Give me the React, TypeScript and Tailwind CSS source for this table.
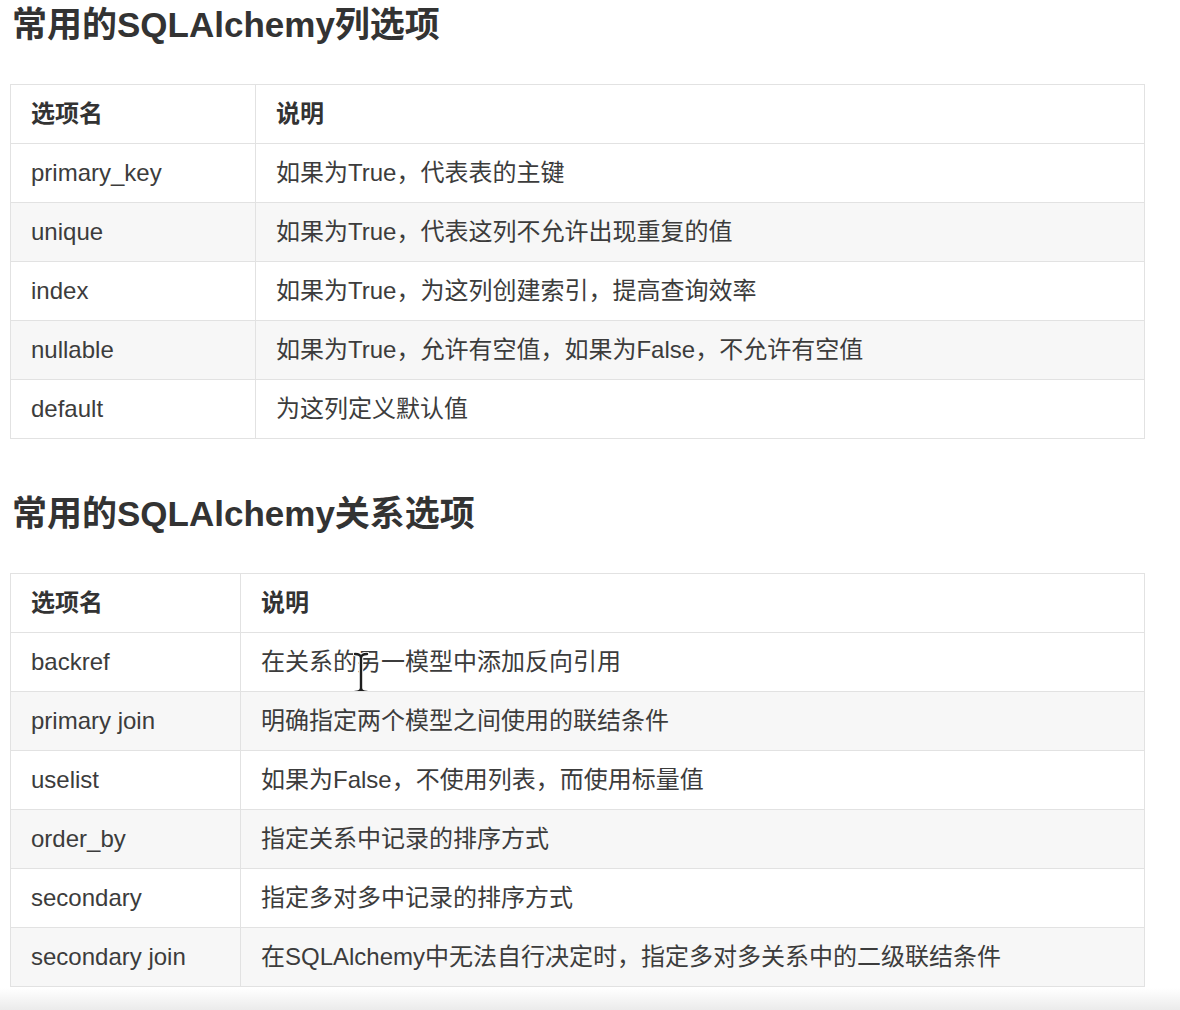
const columnOptions = [
  ["primary_key", "如果为True，代表表的主键"],
  ["unique", "如果为True，代表这列不允许出现重复的值"],
  ["index", "如果为True，为这列创建索引，提高查询效率"],
  ["nullable", "如果为True，允许有空值，如果为False，不允许有空值"],
  ["default", "为这列定义默认值"],
];

const relationOptions = [
  ["backref", "在关系的另一模型中添加反向引用"],
  ["primary join", "明确指定两个模型之间使用的联结条件"],
  ["uselist", "如果为False，不使用列表，而使用标量值"],
  ["order_by", "指定关系中记录的排序方式"],
  ["secondary", "指定多对多中记录的排序方式"],
  ["secondary join", "在SQLAlchemy中无法自行决定时，指定多对多关系中的二级联结条件"],
];

const font = "font-['Liberation_Sans','Noto_Sans_CJK_SC',sans-serif]";

// text cursor caught in the video frame
const IBeam = () => (
  <svg
    className="absolute left-[342px] top-[19px]"
    width="16"
    height="42"
    viewBox="0 0 16 42"
    fill="none"
  >
    <path
      d="M2 2 Q8 2 8 6 Q8 2 14 2 M8 6 V36 M2 40 Q8 40 8 36 Q8 40 14 40"
      stroke="#fff"
      strokeWidth="4.5"
      strokeLinecap="round"
    />
    <path
      d="M2 2 Q8 2 8 6 Q8 2 14 2 M8 6 V36 M2 40 Q8 40 8 36 Q8 40 14 40"
      stroke="#1e1e1e"
      strokeWidth="2.4"
      strokeLinecap="round"
    />
  </svg>
);

const OptionTable = ({
  rows,
  firstCol,
  cursorRow,
}: {
  rows: string[][];
  firstCol: string;
  cursorRow?: number;
}) => (
  <div className="w-[1135px] border border-[#e2e2e2] bg-white">
    <div className="flex h-[58px] items-center text-[24px] font-bold text-[#333]">
      <div className={`${firstCol} flex h-full items-center border-r border-[#e2e2e2] pl-5`}>选项名</div>
      <div className="pl-5">说明</div>
    </div>
    {rows.map(([name, desc], i) => (
      <div
        key={name}
        className={`relative flex h-[59px] items-center border-t border-[#e2e2e2] text-[24px] text-[#3c3c3c] ${
          i % 2 === 1 ? "bg-[#f7f7f7]" : "bg-white"
        }`}
      >
        <div className={`${firstCol} flex h-full items-center border-r border-[#e2e2e2] pl-5`}>{name}</div>
        <div className="pl-5">{desc}</div>
        {cursorRow === i && <IBeam />}
      </div>
    ))}
  </div>
);

export default function App() {
  return (
    <div className={`${font} min-h-[1010px] bg-white flex flex-col`}>
      <div className="pl-[10px]">
        <h1 className="h-[50px] pl-[2px] text-[35px] font-bold leading-[50px] text-[#333]">
          常用的SQLAlchemy列选项
        </h1>
        <div className="mt-[34px]">
          <OptionTable rows={columnOptions} firstCol="w-[245px]" />
        </div>
        <h1 className="mt-[50px] h-[50px] pl-[2px] text-[35px] font-bold leading-[50px] text-[#333]">
          常用的SQLAlchemy关系选项
        </h1>
        <div className="mt-[34px]">
          <OptionTable rows={relationOptions} firstCol="w-[230px]" cursorRow={0} />
        </div>
      </div>
      <div className="mt-auto h-[22px] bg-gradient-to-b from-white to-[#ebebeb]" />
    </div>
  );
}
